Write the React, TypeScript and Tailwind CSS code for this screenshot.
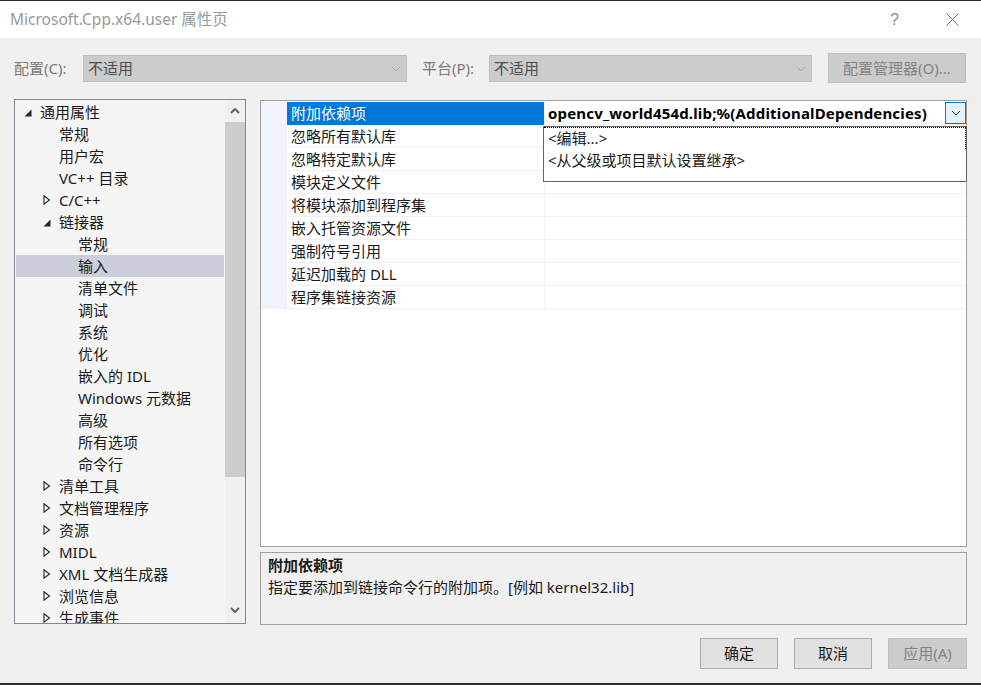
import React from "react";

type TreeItem = { label: string; level: number; state?: "open" | "closed"; selected?: boolean };

const tree: TreeItem[] = [
  { label: "通用属性", level: 0, state: "open" },
  { label: "常规", level: 1 },
  { label: "用户宏", level: 1 },
  { label: "VC++ 目录", level: 1 },
  { label: "C/C++", level: 1, state: "closed" },
  { label: "链接器", level: 1, state: "open" },
  { label: "常规", level: 2 },
  { label: "输入", level: 2, selected: true },
  { label: "清单文件", level: 2 },
  { label: "调试", level: 2 },
  { label: "系统", level: 2 },
  { label: "优化", level: 2 },
  { label: "嵌入的 IDL", level: 2 },
  { label: "Windows 元数据", level: 2 },
  { label: "高级", level: 2 },
  { label: "所有选项", level: 2 },
  { label: "命令行", level: 2 },
  { label: "清单工具", level: 1, state: "closed" },
  { label: "文档管理程序", level: 1, state: "closed" },
  { label: "资源", level: 1, state: "closed" },
  { label: "MIDL", level: 1, state: "closed" },
  { label: "XML 文档生成器", level: 1, state: "closed" },
  { label: "浏览信息", level: 1, state: "closed" },
  { label: "生成事件", level: 1, state: "closed" },
];

const props = [
  "附加依赖项",
  "忽略所有默认库",
  "忽略特定默认库",
  "模块定义文件",
  "将模块添加到程序集",
  "嵌入托管资源文件",
  "强制符号引用",
  "延迟加载的 DLL",
  "程序集链接资源",
];

function Tri({ state }: { state?: "open" | "closed" }) {
  if (state === "open")
    return (
      <svg width="8" height="8" viewBox="0 0 8 8" className="mt-[1px]">
        <polygon points="7.5,0.5 7.5,7.5 0.5,7.5" fill="#262626" />
      </svg>
    );
  if (state === "closed")
    return (
      <svg width="8" height="10" viewBox="0 0 8 10">
        <polygon points="1,0.8 6.5,5 1,9.2" fill="none" stroke="#262626" strokeWidth="1.1" />
      </svg>
    );
  return null;
}

function Chevron({ color = "#606060", up = false, w = 10, sw = 1 }: { color?: string; up?: boolean; w?: number; sw?: number }) {
  return (
    <svg width={w} height={w / 2 + 1} viewBox="0 0 10 6">
      {up ? (
        <polyline points="1,5 5,1 9,5" fill="none" stroke={color} strokeWidth={sw} />
      ) : (
        <polyline points="1,1 5,5 9,1" fill="none" stroke={color} strokeWidth={sw} />
      )}
    </svg>
  );
}

export default function App() {
  const indent = ["pl-[8px]", "pl-[27px]", "pl-[46px]"];
  return (
    <div className="w-[981px] h-[685px] overflow-hidden bg-[#f0f0f0] flex flex-col border-t border-[#2b2b2b] border-b-2 border-b-[#2b2b2b] font-['Segoe_UI','Noto_Sans','Noto_Sans_CJK_SC',sans-serif] text-[15px] text-[#1a1a1a]">
      {/* title bar */}
      <div className="h-[37px] shrink-0 bg-white flex items-center pl-[10px] pr-[22px]">
        <div className="flex-1 text-[15.5px] text-[#999999] leading-none">Microsoft.Cpp.x64.user 属性页</div>
        <div className="text-[16px] text-[#8a8a8a] leading-none mr-[47px] font-['Liberation_Sans',sans-serif]">?</div>
        <svg width="13" height="13" viewBox="0 0 13 13">
          <line x1="0.5" y1="0.5" x2="12.5" y2="12.5" stroke="#6f6f6f" strokeWidth="1" />
          <line x1="12.5" y1="0.5" x2="0.5" y2="12.5" stroke="#6f6f6f" strokeWidth="1" />
        </svg>
      </div>

      {/* config row */}
      <div className="mt-[15px] h-[30px] flex items-start pl-[14px] shrink-0">
        <div className="w-[69px] h-[30px] flex items-center text-[#7a7a7a]">配置(C):</div>
        <div className="mt-[2px] w-[324px] h-[27px] bg-[#cccccc] border border-[#bfbfbf] flex items-center pl-[4px] pr-[5px] text-[#4d4d4d]">
          <span className="flex-1">不适用</span>
          <Chevron color="#a8a8a8" w={10} />
        </div>
        <div className="ml-[15px] w-[67px] h-[30px] flex items-center text-[#7a7a7a]">平台(P):</div>
        <div className="mt-[2px] w-[323px] h-[27px] bg-[#cccccc] border border-[#bfbfbf] flex items-center pl-[4px] pr-[5px] text-[#4d4d4d]">
          <span className="flex-1">不适用</span>
          <Chevron color="#a8a8a8" w={10} />
        </div>
        <div className="ml-[16px] w-[138px] h-[30px] bg-[#cccccc] border border-[#bfbfbf] flex items-center justify-center text-[#838383]">
          配置管理器(O)...
        </div>
      </div>

      {/* main */}
      <div className="mt-[16px] flex pl-[14px] shrink-0">
        {/* tree */}
        <div className="w-[232px] h-[525px] border border-[#828790] bg-[#f5f5f5] flex overflow-hidden">
          <div className="flex-1 pt-[1px] px-[1px] overflow-hidden">
            {tree.map((t, i) => (
              <div
                key={i}
                className={`h-[22px] flex items-center ${indent[t.level]} ${t.selected ? "bg-[#cccedb]" : ""}`}
              >
                <div className="w-[16px] flex items-center">
                  <Tri state={t.state} />
                </div>
                <span className="whitespace-nowrap leading-none">{t.label}</span>
              </div>
            ))}
          </div>
          <div className="w-[20px] flex flex-col bg-[#f0f0f0]">
            <div className="h-[22px] flex items-center justify-center">
              <Chevron up color="#606060" w={10} sw={2} />
            </div>
            <div className="h-[355px] bg-[#cdcdcd]" />
            <div className="flex-1" />
            <div className="h-[22px] flex items-center justify-center mb-[2px]">
              <Chevron color="#606060" w={10} sw={2} />
            </div>
          </div>
        </div>

        {/* right column */}
        <div className="ml-[14px] mt-[1px] w-[707px] flex flex-col">
          <div className="relative h-[447px] border border-[#a0a0a0] bg-white pt-[1px]">
            {props.map((p, i) => (
              <div key={i} className="h-[23px] flex">
                <div className="w-[26px] bg-[#f0f4fa]" />
                <div
                  className={`w-[257px] flex items-center pl-[4px] border-b border-[#f0f0f0] ${
                    i === 0 ? "bg-[#0078d7] text-white border-b-[#0078d7]" : ""
                  }`}
                >
                  <span className="leading-none whitespace-nowrap">{p}</span>
                </div>
                <div className="flex-1 flex items-center border-l border-b border-[#f0f0f0] pl-[3px]">
                  {i === 0 && (
                    <>
                      <span className="flex-1 font-bold text-black leading-none whitespace-nowrap tracking-[0.17px]">
                        opencv_world454d.lib;%(AdditionalDependencies)
                      </span>
                      <div className="w-[21px] h-[22px] border border-[#0078d7] bg-[#e5f1fb] flex items-center justify-center">
                        <Chevron color="#333333" w={10} />
                      </div>
                    </>
                  )}
                </div>
              </div>
            ))}
            {/* dropdown popup */}
            <div className="absolute left-[282px] top-[25px] w-[424px] h-[56px] bg-white border border-[#646464]">
              <div className="h-[22px] flex items-center pl-[4px] border-t border-r border-dotted border-black">
                <span className="leading-none">&lt;编辑...&gt;</span>
              </div>
              <div className="h-[22px] flex items-center pl-[4px]">
                <span className="leading-none">&lt;从父级或项目默认设置继承&gt;</span>
              </div>
            </div>
          </div>
          <div className="mt-[5px] h-[73px] border border-[#a0a0a0] bg-[#f0f0f0] pt-[1px] pl-[7px]">
            <div className="h-[22px] flex items-center font-bold">附加依赖项</div>
            <div className="h-[23px] flex items-center">指定要添加到链接命令行的附加项。[例如 kernel32.lib]</div>
          </div>
        </div>
      </div>

      {/* buttons */}
      <div className="mt-[13px] flex justify-end pr-[14px] gap-[16px] shrink-0">
        <div className="w-[78px] h-[31px] bg-[#e1e1e1] border border-[#adadad] flex items-center justify-center">确定</div>
        <div className="w-[78px] h-[31px] bg-[#e1e1e1] border border-[#adadad] flex items-center justify-center">取消</div>
        <div className="w-[79px] h-[31px] bg-[#cccccc] border border-[#bfbfbf] flex items-center justify-center text-[#838383]">应用(A)</div>
      </div>
    </div>
  );
}
